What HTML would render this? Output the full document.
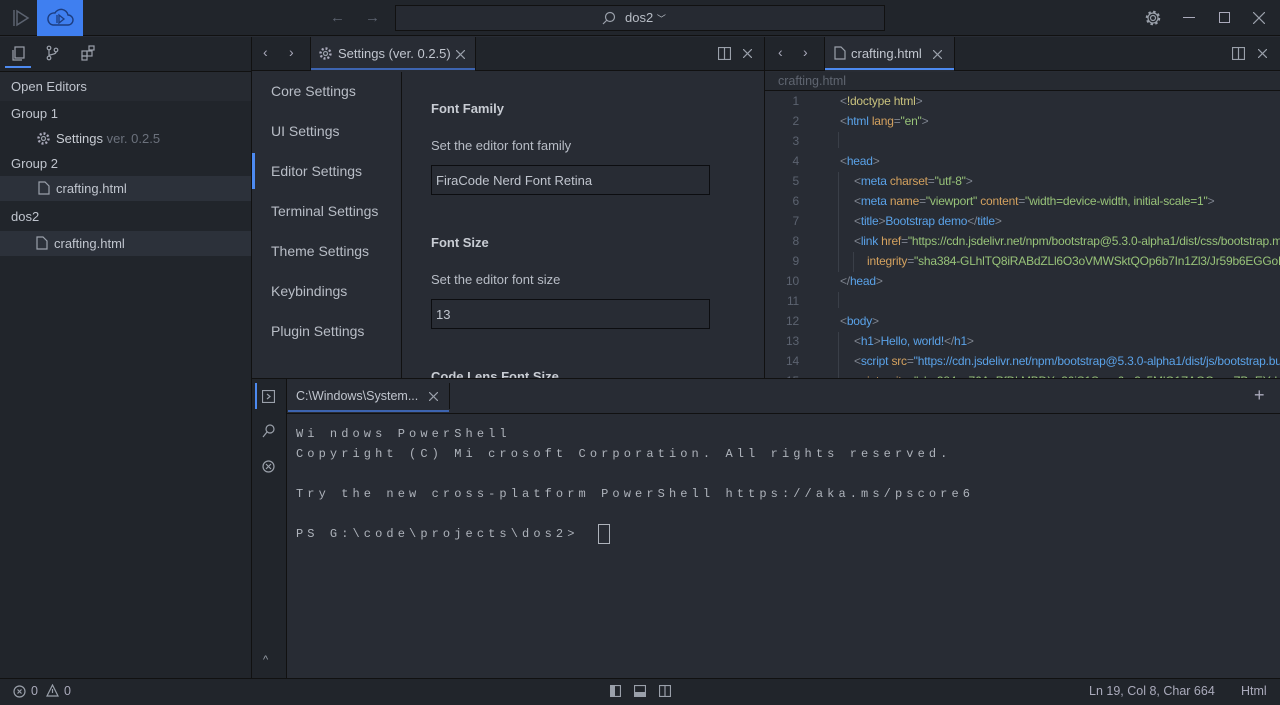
<!DOCTYPE html>
<html><head><meta charset="utf-8"><style>
*{margin:0;padding:0;box-sizing:border-box}
body{width:1280px;height:705px;overflow:hidden;background:#282c34;font-family:"Liberation Sans",sans-serif;color:#c0c5ce;font-size:13px;position:relative}
.a{position:absolute}
.ic{stroke:#9aa0aa;fill:none;stroke-width:1.2}
.code div{position:absolute;left:0;height:20px;line-height:20px;white-space:nowrap;font-size:12px;letter-spacing:-0.2px}
.ln{width:34px;text-align:right;color:#5c6370}
.t{color:#7f8590}.n{color:#5aa2e8}.at{color:#d3a15f}.s{color:#98c379}.d{color:#c9c27e}.b{color:#5aa2e8}
.term div{position:absolute;left:296px;font-family:"Liberation Mono",monospace;font-size:12px;letter-spacing:4.1px;color:#aeb3bb;white-space:pre}
</style></head><body>
<div class="a" style="left:0;top:0;width:1280px;height:36px;background:#21252b;border-bottom:1px solid #111"></div>
<svg class="a" style="left:12px;top:9px" width="18" height="18"><path d="M2 1v16M5 2l11 7-11 7z" stroke="#5c6370" fill="none" stroke-width="1.5"/></svg>
<div class="a" style="left:37px;top:0;width:46px;height:36px;background:#3f7ff0"></div>
<svg class="a" style="left:46px;top:6px" width="28" height="22"><path d="M7 19h15a5 5 0 0 0 0-10 7 7 0 0 0-13-2 6 6 0 0 0-2 12z" stroke="#1c3d80" fill="none" stroke-width="1.4"/><path d="M11 9v8M13 9l5 4-5 4z" stroke="#1c3d80" fill="none" stroke-width="1.3"/></svg>
<div class="a" style="left:330px;top:9px;color:#5c6370;font-size:15px">←</div>
<div class="a" style="left:365px;top:9px;color:#5c6370;font-size:15px">→</div>
<div class="a" style="left:395px;top:5px;width:490px;height:26px;border:1px solid #111;background:#262a32"></div>
<svg class="a" style="left:602px;top:11px" width="14" height="14"><circle cx="8" cy="6" r="4.5" class="ic"/><path d="M5 9l-4 4" class="ic"/></svg>
<div class="a" style="left:625px;top:10px;font-size:13px;color:#b8bdc6">dos2 <span style="font-size:9px">﹀</span></div>
<svg class="a" style="left:1144px;top:9px" width="18" height="18"><circle cx="9" cy="9" r="2.5" class="ic"/><circle cx="9" cy="9" r="6" stroke="#9aa0aa" stroke-width="2.5" fill="none" stroke-dasharray="2.4 2.3"/><circle cx="9" cy="9" r="5" class="ic"/></svg>
<div class="a" style="left:1183px;top:17px;width:12px;height:1px;background:#aab"></div>
<div class="a" style="left:1219px;top:12px;width:11px;height:11px;border:1px solid #aab"></div>
<svg class="a" style="left:1253px;top:12px" width="12" height="12"><path d="M0 0l12 12M12 0L0 12" class="ic"/></svg>

<div class="a" style="left:0;top:37px;width:252px;height:641px;background:#21252b;border-right:1px solid #111"></div>
<div class="a" style="left:0;top:71px;width:251px;height:1px;background:#111"></div>
<svg class="a" style="left:11px;top:45px" width="16" height="16"><rect x="4" y="2" width="9" height="11" class="ic"/><path d="M2 5v10h9" class="ic"/></svg>
<div class="a" style="left:5px;top:66px;width:26px;height:2px;background:#4d8af0"></div>
<svg class="a" style="left:45px;top:45px" width="16" height="16"><circle cx="4" cy="3" r="1.8" class="ic"/><circle cx="4" cy="13" r="1.8" class="ic"/><circle cx="11" cy="5" r="1.8" class="ic"/><path d="M4 5v6M11 7c0 3-7 2-7 4" class="ic"/></svg>
<svg class="a" style="left:80px;top:45px" width="16" height="16"><rect x="2" y="6" width="5" height="5" class="ic"/><rect x="7" y="6" width="5" height="5" class="ic"/><rect x="2" y="11" width="5" height="4" class="ic"/><rect x="9" y="1" width="5" height="4" class="ic"/></svg>
<div class="a" style="left:0;top:72px;width:251px;height:29px;background:#262a31"></div>
<div class="a" style="left:11px;top:79px">Open Editors</div>
<div class="a" style="left:11px;top:106px">Group 1</div>
<svg class="a" style="left:36px;top:131px" width="15" height="15"><circle cx="7.5" cy="7.5" r="2" class="ic"/><circle cx="7.5" cy="7.5" r="5" stroke="#aab" stroke-width="2.4" fill="none" stroke-dasharray="2 1.9"/></svg>
<div class="a" style="left:56px;top:131px;color:#c8ccd3">Settings <span style="color:#6b717c">ver. 0.2.5</span></div>
<div class="a" style="left:11px;top:156px">Group 2</div>
<div class="a" style="left:0;top:176px;width:251px;height:25px;background:#2c313a"></div>
<svg class="a" style="left:38px;top:181px" width="12" height="14"><path d="M1 1h6l4 4v8H1z" class="ic"/></svg>
<div class="a" style="left:56px;top:181px">crafting.html</div>
<div class="a" style="left:11px;top:209px">dos2</div>
<div class="a" style="left:0;top:231px;width:251px;height:25px;background:#2c313a"></div>
<svg class="a" style="left:36px;top:236px" width="12" height="14"><path d="M1 1h6l4 4v8H1z" class="ic"/></svg>
<div class="a" style="left:54px;top:236px">crafting.html</div>

<div class="a" style="left:252px;top:37px;width:512px;height:34px;background:#21252b;border-bottom:1px solid #111"></div>
<div class="a" style="left:263px;top:44px;color:#aab;font-size:14px">‹</div>
<div class="a" style="left:289px;top:44px;color:#aab;font-size:14px">›</div>
<div class="a" style="left:310px;top:37px;width:166px;height:34px;background:#282c34;border-left:1px solid #111;border-right:1px solid #111"></div>
<div class="a" style="left:311px;top:68px;width:164px;height:2px;background:#3d64b0"></div>
<svg class="a" style="left:318px;top:46px" width="15" height="15"><circle cx="7.5" cy="7.5" r="2" class="ic"/><circle cx="7.5" cy="7.5" r="5" stroke="#aab" stroke-width="2.4" fill="none" stroke-dasharray="2 1.9"/></svg>
<div class="a" style="left:338px;top:46px;color:#c0c5ce">Settings (ver. 0.2.5)</div>
<svg class="a" style="left:456px;top:50px" width="9" height="9"><path d="M0 0l9 9M9 0L0 9" class="ic"/></svg>
<svg class="a" style="left:718px;top:47px" width="13" height="13"><rect x="0.5" y="0.5" width="12" height="12" class="ic"/><path d="M6.5 0v13" class="ic"/></svg>
<svg class="a" style="left:743px;top:49px" width="9" height="9"><path d="M0 0l9 9M9 0L0 9" class="ic"/></svg>
<div class="a" style="left:764px;top:37px;width:1px;height:341px;background:#111"></div>
<div class="a" style="left:401px;top:72px;width:1px;height:306px;background:#111"></div>
<div class="a" style="left:252px;top:153px;width:3px;height:36px;background:#4d8af0"></div>
<div class="a" style="left:271px;top:71px;font-size:14px;line-height:40px;color:#b8bdc6">Core Settings<br>UI Settings<br>Editor Settings<br>Terminal Settings<br>Theme Settings<br>Keybindings<br>Plugin Settings</div>
<div class="a" style="left:431px;top:101px;font-weight:bold;color:#c8ccd3">Font Family</div>
<div class="a" style="left:431px;top:138px;color:#b8bdc6">Set the editor font family</div>
<div class="a" style="left:431px;top:165px;width:279px;height:30px;border:1px solid #0c0d10;padding:7px 4px;color:#c0c5ce">FiraCode Nerd Font Retina</div>
<div class="a" style="left:431px;top:235px;font-weight:bold;color:#c8ccd3">Font Size</div>
<div class="a" style="left:431px;top:272px;color:#b8bdc6">Set the editor font size</div>
<div class="a" style="left:431px;top:299px;width:279px;height:30px;border:1px solid #0c0d10;padding:7px 4px;color:#c0c5ce">13</div>
<div class="a" style="left:431px;top:369px;font-weight:bold;color:#c8ccd3;height:9px;overflow:hidden">Code Lens Font Size</div>

<div class="a" style="left:765px;top:37px;width:515px;height:34px;background:#21252b;border-bottom:1px solid #111"></div>
<div class="a" style="left:778px;top:44px;color:#aab;font-size:14px">‹</div>
<div class="a" style="left:803px;top:44px;color:#aab;font-size:14px">›</div>
<div class="a" style="left:824px;top:37px;width:131px;height:34px;background:#282c34;border-left:1px solid #111;border-right:1px solid #111"></div>
<div class="a" style="left:825px;top:68px;width:129px;height:2px;background:#4d8af0"></div>
<svg class="a" style="left:834px;top:46px" width="12" height="14"><path d="M1 1h6l4 4v8H1z" class="ic"/></svg>
<div class="a" style="left:851px;top:46px">crafting.html</div>
<svg class="a" style="left:933px;top:50px" width="9" height="9"><path d="M0 0l9 9M9 0L0 9" class="ic"/></svg>
<svg class="a" style="left:1232px;top:47px" width="13" height="13"><rect x="0.5" y="0.5" width="12" height="12" class="ic"/><path d="M6.5 0v13" class="ic"/></svg>
<svg class="a" style="left:1258px;top:49px" width="9" height="9"><path d="M0 0l9 9M9 0L0 9" class="ic"/></svg>
<div class="a" style="left:765px;top:72px;width:515px;height:19px;background:#262a31;border-bottom:1px solid #111;color:#5f6570;padding:2px 13px;font-size:12.5px">crafting.html</div>
<div class="a" style="left:838px;top:132px;width:1px;height:16px;background:#3a3f48"></div>
<div class="a" style="left:838px;top:172px;width:1px;height:100px;background:#3a3f48"></div>
<div class="a" style="left:853px;top:252px;width:1px;height:20px;background:#3a3f48"></div>
<div class="a" style="left:838px;top:292px;width:1px;height:16px;background:#3a3f48"></div>
<div class="a" style="left:838px;top:332px;width:1px;height:46px;background:#3a3f48"></div>
<div class="a code" style="left:765px;top:91px;width:515px;height:287px;overflow:hidden">
<div class="ln" style="top:0">1</div><div style="left:75px;top:0"><span class="t">&lt;</span><span class="d">!doctype html</span><span class="t">&gt;</span></div>
<div class="ln" style="top:20px">2</div><div style="left:75px;top:20px"><span class="t">&lt;</span><span class="n">html</span> <span class="at">lang</span><span class="t">=</span><span class="s">"en"</span><span class="t">&gt;</span></div>
<div class="ln" style="top:40px">3</div>
<div class="ln" style="top:60px">4</div><div style="left:75px;top:60px"><span class="t">&lt;</span><span class="n">head</span><span class="t">&gt;</span></div>
<div class="ln" style="top:80px">5</div><div style="left:89px;top:80px"><span class="t">&lt;</span><span class="n">meta</span> <span class="at">charset</span><span class="t">=</span><span class="s">"utf-8"</span><span class="t">&gt;</span></div>
<div class="ln" style="top:100px">6</div><div style="left:89px;top:100px"><span class="t">&lt;</span><span class="n">meta</span> <span class="at">name</span><span class="t">=</span><span class="s">"viewport"</span> <span class="at">content</span><span class="t">=</span><span class="s">"width=device-width, initial-scale=1"</span><span class="t">&gt;</span></div>
<div class="ln" style="top:120px">7</div><div style="left:89px;top:120px"><span class="t">&lt;</span><span class="n">title</span><span class="t">&gt;</span><span class="b">Bootstrap demo</span><span class="t">&lt;/</span><span class="n">title</span><span class="t">&gt;</span></div>
<div class="ln" style="top:140px">8</div><div style="left:89px;top:140px"><span class="t">&lt;</span><span class="n">link</span> <span class="at">href</span><span class="t">=</span><span class="s">"https://cdn.jsdelivr.net/npm/bootstrap@5.3.0-alpha1/dist/css/bootstrap.min.css"</span></div>
<div class="ln" style="top:160px">9</div><div style="left:102px;top:160px"><span class="at">integrity</span><span class="t">=</span><span class="s">"sha384-GLhlTQ8iRABdZLl6O3oVMWSktQOp6b7In1Zl3/Jr59b6EGGoI1aFkw7cmDA6j6gD"</span></div>
<div class="ln" style="top:180px">10</div><div style="left:75px;top:180px"><span class="t">&lt;/</span><span class="n">head</span><span class="t">&gt;</span></div>
<div class="ln" style="top:200px">11</div>
<div class="ln" style="top:220px">12</div><div style="left:75px;top:220px"><span class="t">&lt;</span><span class="n">body</span><span class="t">&gt;</span></div>
<div class="ln" style="top:240px">13</div><div style="left:89px;top:240px"><span class="t">&lt;</span><span class="n">h1</span><span class="t">&gt;</span><span class="b">Hello, world!</span><span class="t">&lt;/</span><span class="n">h1</span><span class="t">&gt;</span></div>
<div class="ln" style="top:260px">14</div><div style="left:89px;top:260px"><span class="t">&lt;</span><span class="n">script</span> <span class="at">src</span><span class="t">=</span><span class="b">"https://cdn.jsdelivr.net/npm/bootstrap@5.3.0-alpha1/dist/js/bootstrap.bundle.min.js"</span></div>
<div class="ln" style="top:280px">15</div><div style="left:102px;top:280px"><span class="at">integrity</span><span class="t">=</span><span class="s">"sha384-w76AqPfDkMBDXo30jS1Sgez6pr3x5MlQ1ZAGC+nuZB+EYdgRZgiwxhTBTkF7CXvN"</span></div>
</div>

<div class="a" style="left:252px;top:378px;width:1028px;height:1px;background:#111"></div>
<div class="a" style="left:252px;top:379px;width:35px;height:299px;background:#21252b;border-right:1px solid #111"></div>
<div class="a" style="left:255px;top:383px;width:2px;height:26px;background:#4d8af0"></div>
<svg class="a" style="left:262px;top:390px" width="13" height="13"><rect x="0.5" y="0.5" width="12" height="12" class="ic"/><path d="M5 4l3 2.5L5 9" class="ic"/></svg>
<svg class="a" style="left:262px;top:424px" width="13" height="14"><circle cx="8" cy="5" r="4" class="ic"/><path d="M5 8l-4 5" class="ic"/></svg>
<svg class="a" style="left:262px;top:460px" width="13" height="13"><circle cx="6.5" cy="6.5" r="5.5" class="ic"/><path d="M4 4l5 5M9 4l-5 5" class="ic"/></svg>
<div class="a" style="left:263px;top:654px;color:#9aa0aa;font-size:11px">^</div>
<div class="a" style="left:287px;top:413px;width:993px;height:1px;background:#111"></div>
<div class="a" style="left:449px;top:383px;width:1px;height:26px;background:#111"></div>
<div class="a" style="left:288px;top:410px;width:161px;height:2px;background:#3d64b0"></div>
<div class="a" style="left:296px;top:389px;font-size:12.5px;color:#c0c5ce">C:\Windows\System...</div>
<svg class="a" style="left:429px;top:392px" width="9" height="9"><path d="M0 0l9 9M9 0L0 9" class="ic"/></svg>
<div class="a" style="left:1254px;top:386px;color:#aab;font-size:18px;line-height:18px">+</div>
<div class="term">
<div style="top:427px">Wi ndows PowerShell</div>
<div style="top:447px">Copyright (C) Mi crosoft Corporation. All rights reserved.</div>
<div style="top:487px">Try the new cross-platform PowerShell https://aka.ms/pscore6</div>
<div style="top:527px">PS G:\code\projects\dos2&gt;</div>
</div>
<div class="a" style="left:598px;top:524px;width:12px;height:20px;border:1px solid #aeb3bb"></div>

<div class="a" style="left:0;top:678px;width:1280px;height:27px;background:#21252b;border-top:1px solid #111"></div>
<svg class="a" style="left:13px;top:685px" width="13" height="13"><circle cx="6.5" cy="6.5" r="5.5" class="ic"/><path d="M4.5 4.5l4 4M8.5 4.5l-4 4" class="ic"/></svg>
<div class="a" style="left:31px;top:684px;font-size:12.5px;color:#aab">0</div>
<svg class="a" style="left:46px;top:684px" width="13" height="13"><path d="M6.5 1L12 12H1z" class="ic"/><path d="M6.5 5v4" class="ic"/></svg>
<div class="a" style="left:64px;top:684px;font-size:12.5px;color:#aab">0</div>
<svg class="a" style="left:610px;top:685px" width="11" height="12"><rect x="0.5" y="0.5" width="10" height="11" class="ic"/><rect x="1" y="1" width="4" height="10" fill="#9aa0aa"/></svg>
<svg class="a" style="left:634px;top:685px" width="12" height="12"><rect x="0.5" y="0.5" width="11" height="11" class="ic"/><rect x="1" y="7" width="10" height="4" fill="#9aa0aa"/></svg>
<svg class="a" style="left:659px;top:685px" width="12" height="12"><rect x="0.5" y="0.5" width="11" height="11" class="ic"/><path d="M6 0v12" class="ic"/></svg>
<div class="a" style="left:1089px;top:684px;font-size:12.5px;color:#aab">Ln 19, Col 8, Char 664</div>
<div class="a" style="left:1241px;top:684px;font-size:12.5px;color:#aab">Html</div>
</body></html>
